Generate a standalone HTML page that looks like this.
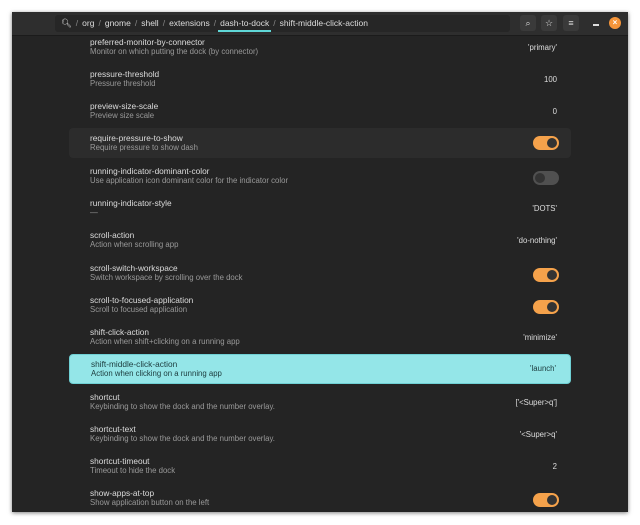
<!DOCTYPE html>
<html><head><style>
*{margin:0;padding:0;box-sizing:border-box}
body{width:640px;height:525px;background:#fff;position:relative;overflow:hidden;font-family:"Liberation Sans",sans-serif}
.win{position:absolute;left:12px;top:12px;width:616px;height:500px;background:#242424;box-shadow:0 1px 4px rgba(0,0,0,.5);overflow:hidden}
.hdr{position:absolute;left:0;top:0;width:616px;height:24px;background:#2e2e2e;border-bottom:1px solid #1b1b1b}
.path{position:absolute;left:43px;top:3px;width:455px;height:17px;background:#262626;border-radius:3px;color:#ddd;font-size:8.5px;line-height:17px;padding-left:6px;white-space:nowrap}
.path span.s{color:#888;margin:0 4px}
.path .cur{position:relative}
.path .cur:after{content:"";position:absolute;left:-2px;right:-2px;bottom:-4px;height:2px;background:#5fd7d7}
.btn{position:absolute;top:3px;width:16px;height:16px;background:#3a3a3a;border-radius:3px;color:#ddd;font-size:9px;text-align:center;line-height:16px}
.min{position:absolute;left:581px;top:12px;width:6px;height:2px;background:#ddd}
.close{position:absolute;left:597px;top:5px;width:12px;height:12px;border-radius:50%;background:#f5953a;color:#fff;font-size:8px;text-align:center;line-height:12px;font-weight:bold}
.row{position:absolute;left:57px;width:502px;height:30px;border-radius:4px}
.row .t{position:absolute;left:21px;top:3px;font-size:8.3px;color:#ddd}
.row .d{position:absolute;left:21px;top:13px;font-size:7.8px;color:#999}
.row .v{position:absolute;right:14px;top:9px;font-size:7.8px;color:#ddd}
.tg{position:absolute;right:12px;top:8px;width:26px;height:14px;border-radius:7px;background:#f5a24b}
.tg:after{content:"";position:absolute;right:2px;top:2px;width:10px;height:10px;border-radius:50%;background:#333}
.tg.off{background:#505050}
.tg.off:after{left:2px;right:auto}
.sel{background:#94e6e8;border:1px solid #6fd0d4}
.sel .t,.sel .d,.sel .v{color:#1b3a3c}
.hov{background:#2c2c2c}
</style></head><body>
<div class="win">
<div class="hdr">
<div class="path">&#x1F50D;&#xFE0E;<span class="s">/</span>org<span class="s">/</span>gnome<span class="s">/</span>shell<span class="s">/</span>extensions<span class="s">/</span><span class="cur">dash-to-dock</span><span class="s">/</span>shift-middle-click-action</div>
<div class="btn" style="left:508px">&#x2315;</div>
<div class="btn" style="left:529px">&#9734;</div>
<div class="btn" style="left:551px">&#8801;</div>
<div class="min"></div>
<div class="close">×</div>
</div>
<div class="row" style="top:22px"><div class="t">preferred-monitor-by-connector</div><div class="d">Monitor on which putting the dock (by connector)</div><div class="v">'primary'</div></div>
<div class="row" style="top:54px"><div class="t">pressure-threshold</div><div class="d">Pressure threshold</div><div class="v">100</div></div>
<div class="row" style="top:86px"><div class="t">preview-size-scale</div><div class="d">Preview size scale</div><div class="v">0</div></div>
<div class="row hov" style="top:116px"><div class="t" style="top:5px">require-pressure-to-show</div><div class="d" style="top:15px">Require pressure to show dash</div><div class="tg"></div></div>
<div class="row" style="top:151px"><div class="t">running-indicator-dominant-color</div><div class="d">Use application icon dominant color for the indicator color</div><div class="tg off"></div></div>
<div class="row" style="top:183px"><div class="t">running-indicator-style</div><div class="d">—</div><div class="v">'DOTS'</div></div>
<div class="row" style="top:215px"><div class="t">scroll-action</div><div class="d">Action when scrolling app</div><div class="v">'do-nothing'</div></div>
<div class="row" style="top:248px"><div class="t">scroll-switch-workspace</div><div class="d">Switch workspace by scrolling over the dock</div><div class="tg"></div></div>
<div class="row" style="top:280px"><div class="t">scroll-to-focused-application</div><div class="d">Scroll to focused application</div><div class="tg"></div></div>
<div class="row" style="top:312px"><div class="t">shift-click-action</div><div class="d">Action when shift+clicking on a running app</div><div class="v">'minimize'</div></div>
<div class="row sel" style="top:342px"><div class="t" style="top:4px">shift-middle-click-action</div><div class="d" style="top:14px">Action when clicking on a running app</div><div class="v">'launch'</div></div>
<div class="row" style="top:377px"><div class="t">shortcut</div><div class="d">Keybinding to show the dock and the number overlay.</div><div class="v">['&lt;Super&gt;q']</div></div>
<div class="row" style="top:409px"><div class="t">shortcut-text</div><div class="d">Keybinding to show the dock and the number overlay.</div><div class="v">'&lt;Super&gt;q'</div></div>
<div class="row" style="top:441px"><div class="t">shortcut-timeout</div><div class="d">Timeout to hide the dock</div><div class="v">2</div></div>
<div class="row" style="top:473px"><div class="t">show-apps-at-top</div><div class="d">Show application button on the left</div><div class="tg"></div></div>
</div>
</body></html>
